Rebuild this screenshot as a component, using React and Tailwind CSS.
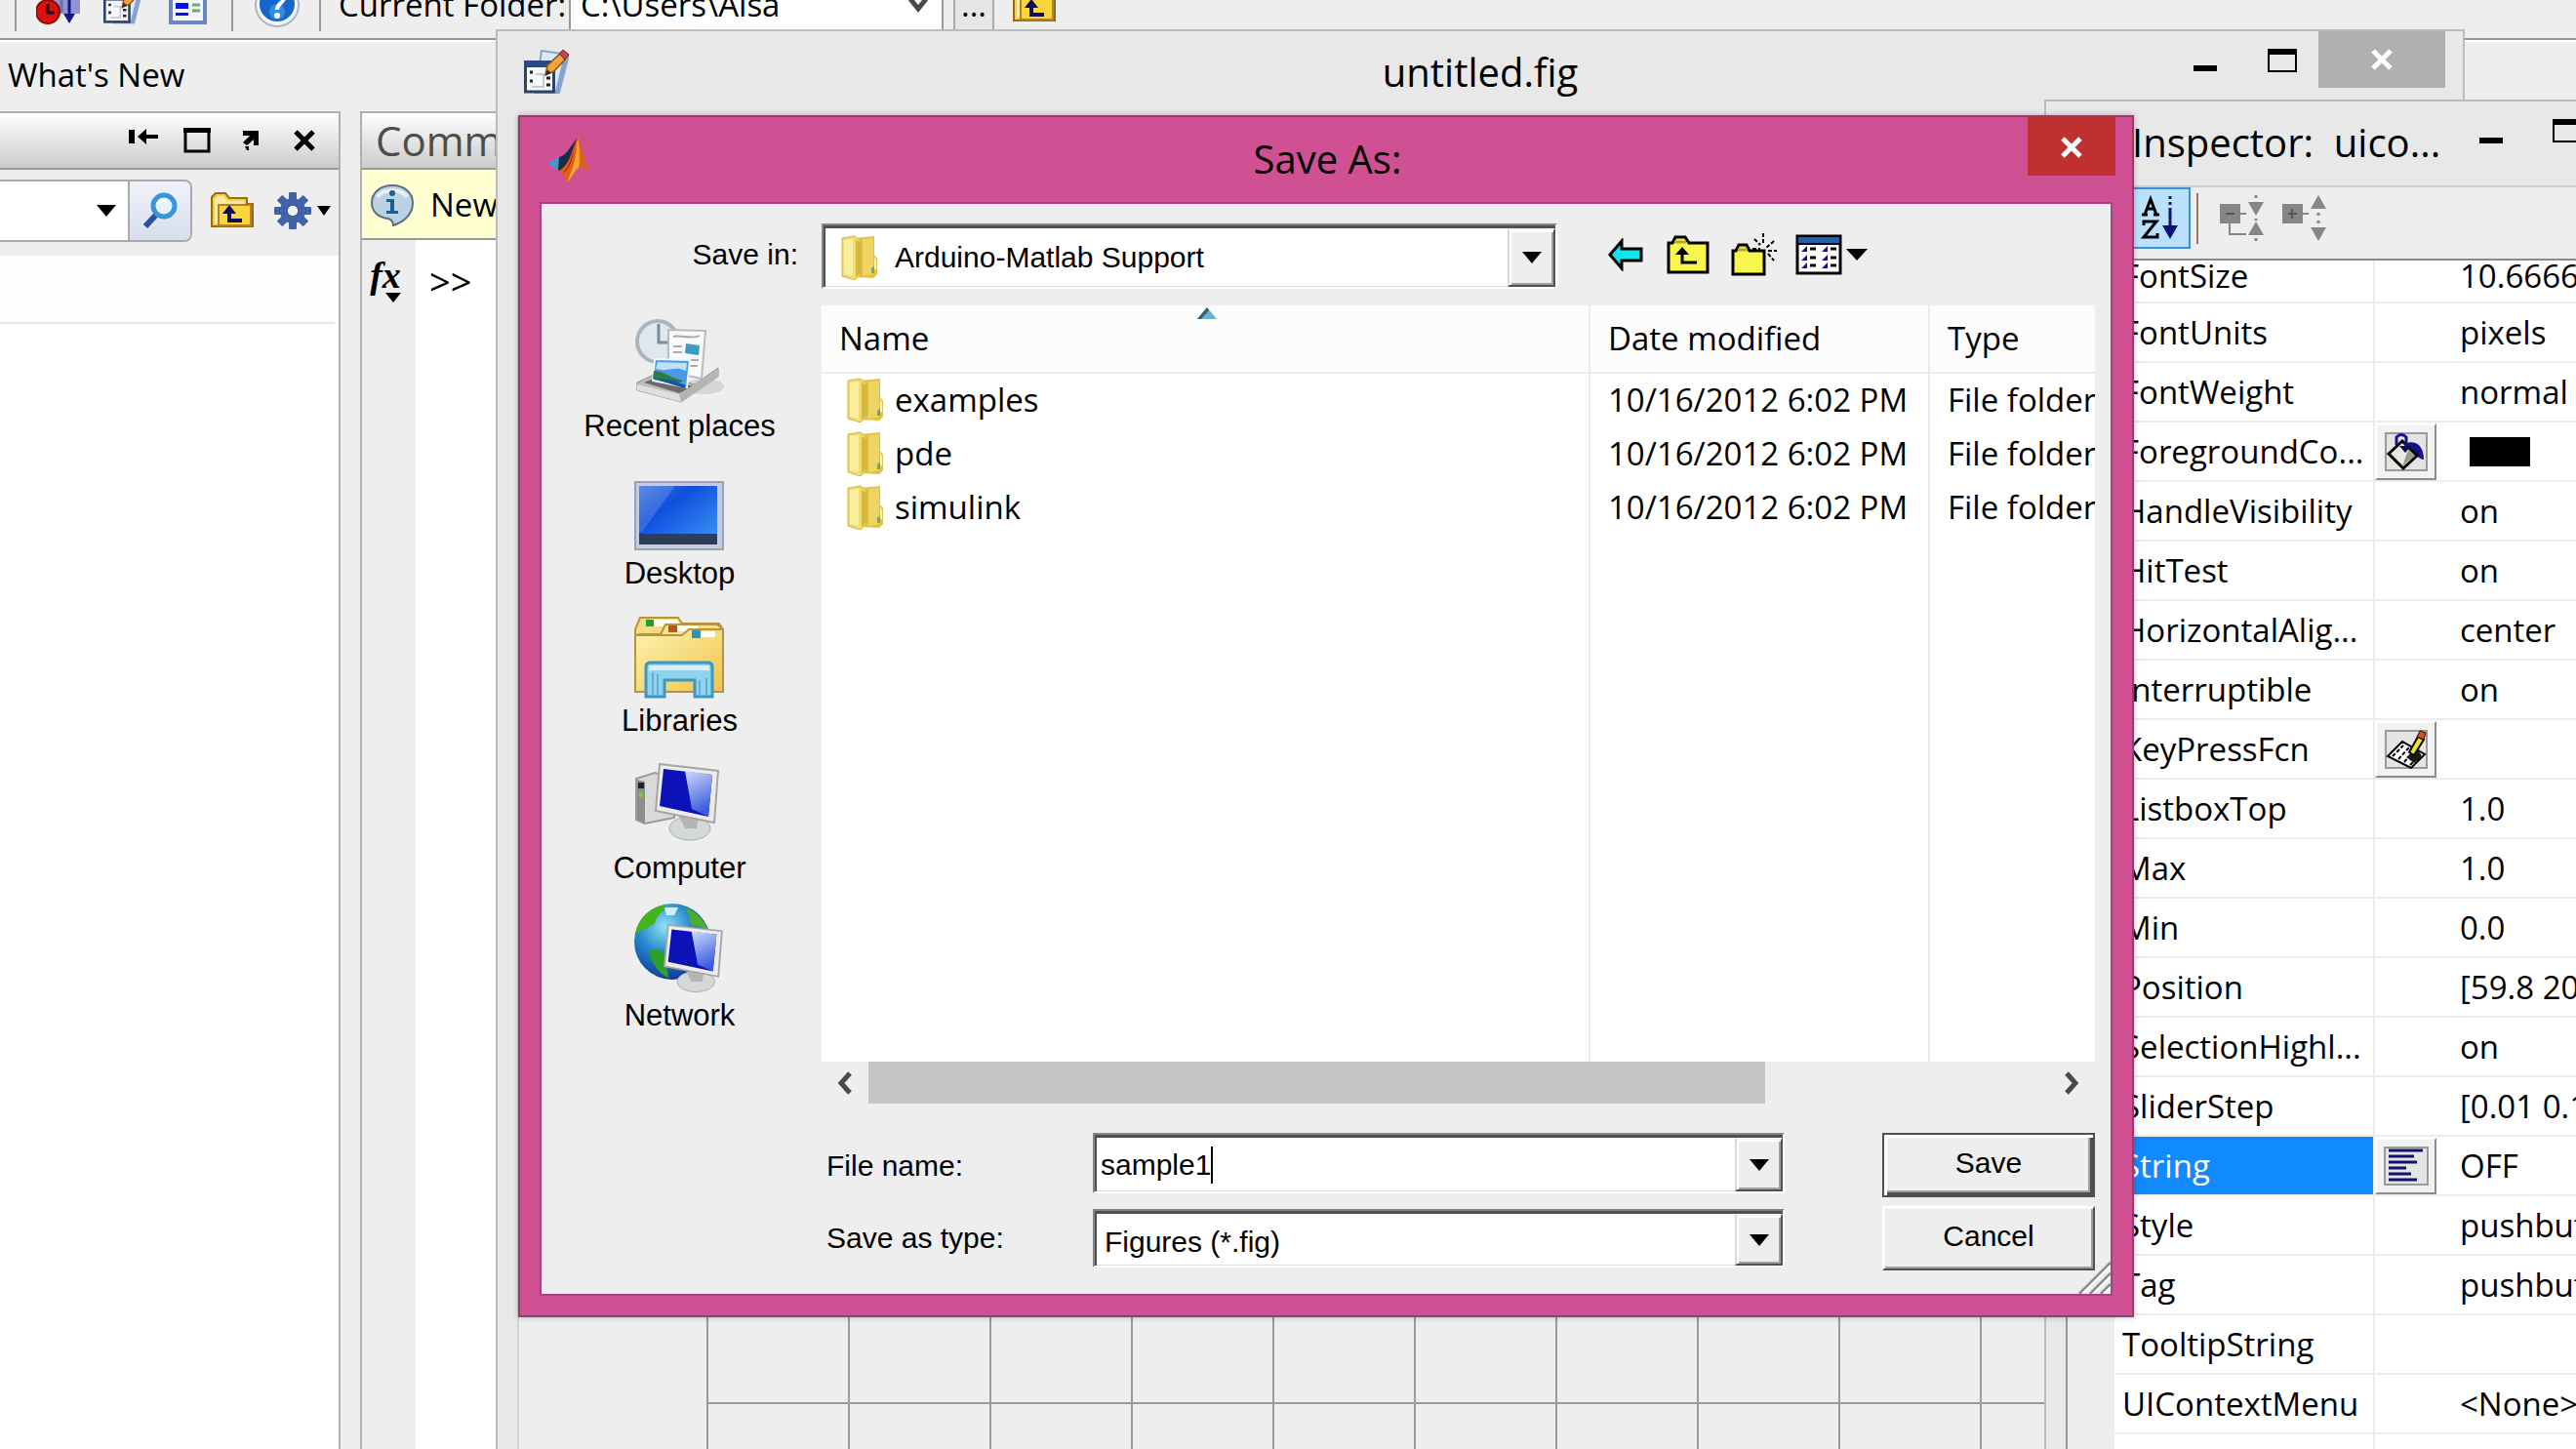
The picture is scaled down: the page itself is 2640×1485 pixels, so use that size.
import React from "react";

const UI = "font-['Open_Sans','Noto_Sans',sans-serif]";
const CLASSIC = "font-['Liberation_Sans',Arial,sans-serif] text-[30px] leading-9";

/* ---------- small glyphs ---------- */

function Triangle({ className = "w-5 h-3" }) {
  return (
    <svg viewBox="0 0 20 12" className={className} preserveAspectRatio="none" aria-hidden="true">
      <path d="M0 0H20L10 12Z" fill="#000" />
    </svg>
  );
}

function Cross({ className, stroke = "#fff" }) {
  return (
    <svg viewBox="0 0 24 22" className={className} aria-hidden="true">
      <path d="M3 2L21 20M21 2L3 20" stroke={stroke} strokeWidth="5" />
    </svg>
  );
}

function Minimize() {
  return (
    <svg viewBox="0 0 24 24" className="h-6 w-6" aria-hidden="true">
      <path d="M0 17H24V23H0Z" fill="#000" />
    </svg>
  );
}

function Maximize() {
  return (
    <svg viewBox="0 0 30 24" className="h-6 w-[30px]" aria-hidden="true">
      <path d="M1 2H29V23H1Z" fill="none" stroke="#000" strokeWidth="2" />
      <path d="M0 0H30V6H0Z" fill="#000" />
    </svg>
  );
}

function Chevron({ d, className = "h-6 w-5" }) {
  return (
    <svg viewBox="0 0 20 24" className={className} aria-hidden="true">
      <path d={d} fill="none" stroke="#4a4a4a" strokeWidth="5" />
    </svg>
  );
}

/* ---------- icons ---------- */

function ClockIcon() {
  return (
    <svg viewBox="0 0 46 40" className="h-10 w-[46px]" aria-hidden="true">
      <rect x="16" y="2" width="29" height="27" fill="#8f95cf" />
      <path d="M26 4V28M20 10H44" stroke="#6a70b4" strokeWidth="3" />
      <path d="M34 0V32" stroke="#14148c" strokeWidth="3" />
      <path d="M28 29H40L34 39Z" fill="#14148c" />
      <circle cx="12" cy="27" r="12" fill="#d81212" stroke="#8c0808" strokeWidth="2" />
      <path d="M12 19V28H19" fill="none" stroke="#300" strokeWidth="3" />
    </svg>
  );
}

function GuideIcon({ className = "h-[46px] w-[46px]" }) {
  return (
    <svg viewBox="0 0 46 46" className={className} aria-hidden="true">
      <path d="M18 1L46 5L36 44H12Z" fill="#dbe8f7" stroke="#8aa5c8" strokeWidth="2" />
      <path d="M42 10L34 43H28" fill="none" stroke="#7fa3d4" strokeWidth="4" />
      <rect x="1.500" y="13" width="29" height="30" fill="#f6f8fb" stroke="#2b4468" strokeWidth="3" />
      <rect x="0" y="11" width="32" height="7" fill="#2a4a86" />
      <path d="M6 23H9M6 32H9M23 29H27M23 36H27" stroke="#222" strokeWidth="3" />
      <path d="M12 25H20V38H8" fill="none" stroke="#c2cad6" strokeWidth="2" />
      <path d="M22 26L24 16L37 4L43 9L31 22Z" fill="#f2a33a" stroke="#8a4f10" strokeWidth="1.500" />
      <path d="M36 4L40 0L46 5L42 10Z" fill="#c8454a" stroke="#722" strokeWidth="1" />
      <path d="M22 26L24 20L28 24Z" fill="#3a2a14" />
    </svg>
  );
}

function ReportIcon() {
  return (
    <svg viewBox="0 0 40 40" className="h-10 w-10" aria-hidden="true">
      <rect x="2" y="-10" width="35" height="48" fill="#f3f6fd" stroke="#6d86c4" strokeWidth="4" />
      <path d="M7 18H20V24H7ZM7 28H20V31H7Z" fill="#0a10e8" />
      <path d="M7 4H20V12H7Z" fill="#0a10e8" />
      <path d="M24 20H32M24 26H32" stroke="#6da86a" strokeWidth="3" />
      <path d="M24 8H32" stroke="#999" strokeWidth="3" />
    </svg>
  );
}

function HelpIcon() {
  return (
    <svg viewBox="0 0 46 46" className="h-[46px] w-[46px]" aria-hidden="true">
      <circle cx="23" cy="23" r="22" fill="#f2f7fd" stroke="#a9b6c8" strokeWidth="2" />
      <circle cx="23" cy="22" r="18" fill="#1466c8" />
      <circle cx="23" cy="30" r="8" fill="#2f8be6" />
      <path d="M16 16C16 7 30 7 30 16C30 21 23 21 23 28" fill="none" stroke="#fff" strokeWidth="4" />
      <circle cx="23" cy="34" r="3" fill="#fff" />
    </svg>
  );
}

function FolderUpGold({ className = "h-10 w-[46px]" }) {
  return (
    <svg viewBox="0 0 46 40" className={className} aria-hidden="true">
      <path d="M2 36V6L6 2H16L20 7H38V13H44V36Z" fill="#f5cf4a" stroke="#9a6a14" strokeWidth="2" />
      <path d="M5 33V8L8 5H14L18 10H35V13H9V33Z" fill="#fbeaa0" />
      <rect x="9" y="14" width="33" height="21" fill="#fbd53e" stroke="#b5831c" strokeWidth="2" />
      <path d="M20 18V30H33" fill="none" stroke="#0c0c5a" strokeWidth="4" />
      <path d="M13 23L20 14L27 23Z" fill="#0c0c5a" />
    </svg>
  );
}

function MagnifierIcon() {
  return (
    <svg viewBox="0 0 36 38" className="h-[38px] w-9" aria-hidden="true">
      <path d="M3 35L15 22" stroke="#2b4fa8" strokeWidth="6" />
      <circle cx="22" cy="14" r="11" fill="#e4f2fc" stroke="#3a95d8" strokeWidth="5" />
      <path d="M16 12C17 8 22 7 25 9" fill="none" stroke="#fff" strokeWidth="3" />
    </svg>
  );
}

function GearIcon() {
  const teeth = [0, 45, 90, 135, 180, 225, 270, 315];
  return (
    <svg viewBox="0 0 38 38" className="h-[38px] w-[38px]" aria-hidden="true">
      {teeth.map((a) => (
        <rect key={a} x="15" y="0" width="8" height="10" rx="1" fill="#3f62a8" transform={`rotate(${a} 19 19)`} />
      ))}
      <circle cx="19" cy="19" r="9" fill="#eef" stroke="#3f62a8" strokeWidth="8" />
      <circle cx="19" cy="19" r="5" fill="#eee" />
    </svg>
  );
}

function InfoIcon() {
  return (
    <svg viewBox="0 0 46 44" className="h-11 w-[46px]" aria-hidden="true">
      <path
        d="M23 2C10 2 2 10 2 20C2 29 9 35 19 36C22 37 24 40 24 43C31 41 44 34 44 20C44 10 36 2 23 2Z"
        fill="#bcd2e2"
        stroke="#5c6f80"
        strokeWidth="2"
      />
      <path d="M8 14C12 6 32 4 38 14" fill="none" stroke="#e6f0f6" strokeWidth="4" />
      <circle cx="23" cy="10" r="3" fill="#1d5f8c" />
      <path d="M17 16H25V28H29V31H17V28H21V19H17Z" fill="#1d5f8c" />
    </svg>
  );
}

function MatlabIcon() {
  return (
    <svg viewBox="0 0 44 46" className="h-[46px] w-11" aria-hidden="true">
      <path d="M0 26L14 19L22 26L12 34Z" fill="#4a93cf" />
      <path d="M12 20C20 18 24 8 31 0L27 20L18 38L11 33Z" fill="#1e2a4a" />
      <path d="M31 0C25 12 24 24 16 31L12 34C16 36 18 42 20 46C26 42 27 34 32 31C37 28 40 32 43 36C38 24 36 8 31 0Z" fill="#e0601a" />
      <path d="M31 0C29 16 30 24 20 46C25 42 27 34 32 31C34 22 33 10 31 0Z" fill="#f7a531" />
      <path d="M27 12C24 24 22 30 16 36C20 34 25 28 27 12Z" fill="#8c1f10" />
    </svg>
  );
}

function FolderIcon({ className = "h-[46px] w-[38px] shrink-0" }) {
  return (
    <svg viewBox="0 0 38 46" className={className} aria-hidden="true">
      <path d="M14 3L34 1V20L37 24V40L33 44L14 43Z" fill="#e2c242" />
      <path d="M22 4L33 3V40L22 42Z" fill="#eed562" />
      <path d="M1 3L14 1L20 6V40L14 46L1 42Z" fill="#efdc70" stroke="#d2b640" strokeWidth="1" />
      <path d="M3 5L12 4V42L3 40Z" fill="#f8eea4" />
      <path d="M15 5L21 8V38L15 43Z" fill="#d8b83c" />
      <path d="M31 34V39H34V31Z" fill="#6aa894" />
      <path d="M34 22L36 26V36L34 34Z" fill="#fbf4c8" />
    </svg>
  );
}

function BackIcon() {
  return (
    <svg viewBox="0 0 36 34" className="h-[34px] w-9" aria-hidden="true">
      <path d="M2 17L14 3V11H34V23H14V31Z" fill="#12e4ea" stroke="#000" strokeWidth="3" />
    </svg>
  );
}

function UpOneLevelIcon() {
  return (
    <svg viewBox="0 0 44 40" className="h-10 w-11" aria-hidden="true">
      <path d="M2 38V8H6L9 2H19L23 8H42V38Z" fill="#f6f64c" stroke="#000" strokeWidth="3" />
      <path d="M8 7H20" stroke="#b8a830" strokeWidth="3" />
      <path d="M16 17V28H31" fill="none" stroke="#000" strokeWidth="3" />
      <path d="M9 20L16 12L23 20Z" fill="#000" />
    </svg>
  );
}

function NewFolderIcon() {
  return (
    <svg viewBox="0 0 48 46" className="h-[46px] w-12" aria-hidden="true">
      <path d="M2 43V19H5L8 13H16L19 19H34V43Z" fill="#f6f64c" stroke="#000" strokeWidth="3" />
      <path d="M7 18H17" stroke="#b8a830" strokeWidth="3" />
      <path
        d="M33 1V11M24 7L30 13M44 9L36 16M22 17H30M38 19H47M38 22L44 29M34 21V26"
        stroke="#000"
        strokeWidth="2"
        strokeDasharray="4 2"
      />
    </svg>
  );
}

function ViewsIcon() {
  return (
    <svg viewBox="0 0 48 42" className="h-[42px] w-12" aria-hidden="true">
      <rect x="2" y="2" width="44" height="38" fill="#fff" stroke="#000" strokeWidth="3" />
      <rect x="3" y="3" width="42" height="6" fill="#1f5fae" />
      <path d="M1 10H47" stroke="#000" strokeWidth="2" />
      {[16, 25, 33].map((y) => (
        <g key={y}>
          <path d={`M6 ${y + 2}L12 ${y - 4}V${y + 2}ZM27 ${y + 2}L33 ${y - 4}V${y + 2}Z`} fill="#12128c" />
          <path d={`M15 ${y - 1}H21M36 ${y - 1}H42`} stroke="#000" strokeWidth="3" />
        </g>
      ))}
    </svg>
  );
}

function RecentPlacesIcon() {
  return (
    <svg viewBox="0 0 92 90" className="h-[90px] w-[92px]" aria-hidden="true">
      <ellipse cx="72" cy="70" rx="20" ry="8" fill="#d6d6d6" />
      <circle cx="24" cy="24" r="21" fill="#dfe8ee" stroke="#aab6bf" strokeWidth="4" />
      <path d="M25 6V25H34" fill="none" stroke="#7d8b98" strokeWidth="3" />
      <path d="M35 12L73 13L69 62L35 55Z" fill="#f8f9fa" stroke="#b8bcc0" strokeWidth="2" />
      <path d="M40 19C46 17 60 22 67 18M40 29H49M40 35H49M57 43H66M57 49H65" fill="none" stroke="#b3a7a7" strokeWidth="2" />
      <path d="M53 26L67 28L66 38L52 36Z" fill="#3b9bc0" />
      <path d="M3 66L20 58L62 68L86 51V60L48 86L3 74Z" fill="#bcbcba" stroke="#8e8e8c" strokeWidth="1" />
      <path d="M10 66L22 61L62 70L46 77Z" fill="#6c6c6c" />
      <path d="M3 68L46 78L86 53V60L48 86L3 74Z" fill="#dededc" />
      <path d="M46 78L86 53V60L48 86Z" fill="#b4b4b2" />
      <path d="M21 42L57 43L54 71L19 64Z" fill="#4a9be6" stroke="#eef6fc" strokeWidth="2" />
      <path d="M24 45L54 46L53 54C40 48 34 56 22 52Z" fill="#bfe1f8" />
      <path d="M20 54C30 54 38 62 50 64L44 68L19 62Z" fill="#2e7a48" />
      <path d="M19 62L40 64L53 69L52 72Z" fill="#1554a0" />
    </svg>
  );
}

function DesktopIcon() {
  return (
    <svg viewBox="0 -14 92 86" className="h-[86px] w-[92px]" aria-hidden="true">
      <defs>
        <linearGradient id="desk" x1="0" y1="0" x2="1" y2="1">
          <stop offset="0" stopColor="#3f74dc" />
          <stop offset="0.350" stopColor="#0f4fdc" />
          <stop offset="1" stopColor="#4098f8" />
        </linearGradient>
      </defs>
      <rect x="1" y="1" width="90" height="69" fill="#c4cddd" stroke="#98a3b8" strokeWidth="2" />
      <rect x="5" y="5" width="80" height="60" fill="url(#desk)" />
      <path d="M5 5H42L8 52H5Z" fill="#fff" opacity="0.150" />
      <rect x="5" y="54" width="80" height="11" fill="#2e3d58" />
    </svg>
  );
}

function LibrariesIcon() {
  return (
    <svg viewBox="0 -2 94 88" className="h-[88px] w-[94px]" aria-hidden="true">
      <defs>
        <linearGradient id="lib" x1="0" y1="0" x2="1" y2="1">
          <stop offset="0" stopColor="#fdf3b0" />
          <stop offset="1" stopColor="#efc44a" />
        </linearGradient>
      </defs>
      <path d="M2 78V14L7 2H46L50 8H88L92 14V78Z" fill="#f4dc83" stroke="#b8943c" strokeWidth="2" />
      <path d="M20 4H46V11H20ZM42 9H60V16H42Z" fill="#fffdf0" />
      <rect x="13" y="4" width="8" height="7" fill="#17a52a" />
      <path d="M2 78V22L6 19H28L33 9H86L92 14V78Z" fill="#f8e18c" stroke="#b8943c" strokeWidth="2" />
      <path d="M44 10H66V16H44Z" fill="#fffdf0" />
      <rect x="36" y="10" width="9" height="7" fill="#c4501c" />
      <path d="M2 78V20H50L57 14H92V78Z" fill="url(#lib)" stroke="#b8943c" strokeWidth="2" />
      <path d="M68 16H84V22H68Z" fill="#fffdf0" />
      <rect x="60" y="15" width="9" height="8" fill="#2a94c0" />
      <path d="M13 83V52Q13 48 18 48H76Q81 48 81 52V83H63V66H32V83Z" fill="#8fd3ee" stroke="#3d97c0" strokeWidth="3" />
      <path d="M16 51H78V56H16Z" fill="#d4f1fb" />
      <path d="M20 58V82M25 60V82M68 66V82M75 64V82" stroke="#5cb0d8" strokeWidth="2" />
    </svg>
  );
}

function Monitor({ id }) {
  return (
    <g>
      <defs>
        <linearGradient id={id} x1="0" y1="0" x2="0.300" y2="1">
          <stop offset="0" stopColor="#cfdcfa" />
          <stop offset="1" stopColor="#3a5ae0" />
        </linearGradient>
      </defs>
      <ellipse cx="35" cy="66" rx="21" ry="12" fill="#d5d8d8" stroke="#a9acac" strokeWidth="1" />
      <path d="M24 54H44L42 66H30Z" fill="#b4b6b4" />
      <path d="M4 0L64 7L60 60L0 48Z" fill="#ececec" stroke="#a5a5a5" strokeWidth="2" />
      <path d="M8 5L58 11L54 54L4 43Z" fill="#0d12b8" />
      <path d="M30 7L58 11L54 54L37 46Z" fill={`url(#${id})`} />
    </g>
  );
}

function ComputerIcon() {
  return (
    <svg viewBox="0 2 94 84" className="h-[84px] w-[94px]" aria-hidden="true">
      <path d="M3 18L22 12L42 18V58L12 64L3 60Z" fill="#d9d9d9" stroke="#9a9a9a" strokeWidth="2" />
      <path d="M4 19L12 21V63L4 60Z" fill="#8d8d8d" />
      <rect x="5" y="22" width="6" height="6" fill="#222" />
      <rect x="6" y="32" width="4" height="5" fill="#7ac14a" />
      <g transform="translate(23 3)">
        <Monitor id="scr-a" />
      </g>
    </svg>
  );
}

function NetworkIcon() {
  return (
    <svg viewBox="0 4 94 94" className="h-[94px] w-[94px] overflow-visible" aria-hidden="true">
      <defs>
        <radialGradient id="globe" cx="0.400" cy="0.300" r="0.700">
          <stop offset="0" stopColor="#8fe2f6" />
          <stop offset="0.500" stopColor="#2489cc" />
          <stop offset="1" stopColor="#123a94" />
        </radialGradient>
      </defs>
      <circle cx="40" cy="41" r="39" fill="url(#globe)" />
      <path d="M2 34C5 16 18 5 34 3C30 12 24 14 22 22C16 28 8 28 2 34Z" fill="#43b31e" />
      <path d="M52 6C64 10 72 18 76 28L60 24C56 18 60 14 52 6Z" fill="#4cae2c" />
      <path d="M16 50C26 46 34 52 34 60L36 78C26 74 18 62 16 50Z" fill="#2ea02a" />
      <path d="M32 6H46L42 14H34Z" fill="#cfeff8" />
      <g transform="translate(32 24) scale(0.920 0.880)">
        <Monitor id="scr-b" />
      </g>
    </svg>
  );
}

function PaintIcon() {
  return (
    <svg viewBox="0 0 44 40" className="h-10 w-11" aria-hidden="true">
      <rect x="1" y="1" width="42" height="38" fill="#e4e4e4" stroke="#9a9a9a" strokeWidth="2" />
      <path d="M22 11C34 8 40 16 40 28C36 28 34 24 29 22Z" fill="#14148c" />
      <path d="M4 22L18 9L33 24L19 37Z" fill="#e8e8e0" stroke="#000" strokeWidth="3" />
      <path d="M18 35L31 24L24 18Z" fill="#9a9a90" />
      <path d="M12 13V5Q17 0 22 5V18" fill="none" stroke="#14148c" strokeWidth="3" />
      <path d="M15 14H27L21 21Z" fill="#0a0a5a" />
    </svg>
  );
}

function KeypadIcon() {
  return (
    <svg viewBox="0 0 44 40" className="h-10 w-11" aria-hidden="true">
      <rect x="1" y="1" width="42" height="38" fill="#e4e4e4" stroke="#9a9a9a" strokeWidth="2" />
      <path d="M3 27L18 12L41 25L27 39Z" fill="#fff" stroke="#000" strokeWidth="2" />
      <path d="M8 27L19 16M14 30L25 18M20 33L30 21M26 36L37 25" stroke="#000" strokeWidth="2" strokeDasharray="4 2" />
      <path d="M22 28L34 20L38 28L30 34Z" fill="#1a1a10" />
      <path d="M25 23L34 7L40 10L30 26Z" fill="#f0e42a" stroke="#000" strokeWidth="2" />
      <path d="M33 7L36 1L42 3L40 10Z" fill="#d0502c" stroke="#400" strokeWidth="1" />
    </svg>
  );
}

function TextLinesIcon() {
  return (
    <svg viewBox="0 0 46 40" className="h-10 w-[46px]" aria-hidden="true">
      <rect x="1" y="1" width="44" height="38" fill="#e4e4e4" stroke="#9a9a9a" strokeWidth="2" />
      <path d="M5 4H40M5 10H31M5 16H34M5 22H23M5 28H28M5 34H34" stroke="#12126e" strokeWidth="3" />
    </svg>
  );
}

function SortAzIcon() {
  return (
    <svg viewBox="0 0 40 48" className="h-12 w-10" aria-hidden="true">
      <path d="M2 20H8M14 20H20M5 20L11 4L17 20M7 14H15" fill="none" stroke="#000" strokeWidth="3" />
      <path d="M4 31V27H17L4 43H18V39" fill="none" stroke="#000" strokeWidth="3" />
      <path d="M31 1V4M31 7V10M31 13V34" stroke="#10107c" strokeWidth="3" />
      <path d="M23 31H39L31 45Z" fill="#10107c" />
    </svg>
  );
}

function CollapseIcon() {
  return (
    <svg viewBox="0 0 46 48" className="h-12 w-[46px]" aria-hidden="true">
      <path d="M0 9H21V29H0Z" fill="#868686" />
      <path d="M6 19H15" stroke="#555" strokeWidth="2" />
      <path d="M21 19H27M10 29V40H27" fill="none" stroke="#868686" strokeWidth="2" />
      <path d="M29 7H45L37 21ZM37 27L45 41H29Z" fill="#868686" />
      <path d="M37 0V3M37 24V26M37 44V47" stroke="#868686" strokeWidth="3" />
    </svg>
  );
}

function ExpandIcon() {
  return (
    <svg viewBox="0 0 46 48" className="h-12 w-[46px]" aria-hidden="true">
      <path d="M0 9H21V29H0Z" fill="#868686" />
      <path d="M6 19H15M10 14V24" stroke="#555" strokeWidth="2" />
      <path d="M21 19H27" stroke="#868686" strokeWidth="2" />
      <path d="M37 0L45 14H29ZM29 33H45L37 47Z" fill="#868686" />
      <path d="M37 18V21M37 26V29" stroke="#868686" strokeWidth="3" />
    </svg>
  );
}

/* ---------- classic controls ---------- */

function Sunken({ className = "", children }) {
  return (
    <div
      className={`relative flex items-center border-2 border-t-[#858585] border-l-[#858585] border-r-white border-b-white bg-white pt-[3px] pl-0.5 shadow-[inset_2px_3px_0_#505050,inset_0_-1px_0_#dcdcdc] ${className}`}
    >
      {children}
      <span className="pointer-events-none absolute top-[3px] right-0 bottom-0 flex w-[49px] items-center justify-center border-2 border-t-[#f4f4f4] border-l-[#d8d8d8] border-r-[#505050] border-b-[#505050] bg-[#eeeeee] shadow-[inset_2px_2px_0_#fff,inset_-2px_-2px_0_#a0a0a0]">
        <Triangle className="h-3 w-5" />
      </span>
    </div>
  );
}

function PushButton({ primary, children }) {
  return (
    <button
      type="button"
      className={
        primary
          ? `h-[66px] w-[218px] border-2 border-[#505050] bg-[#eeeeee] pb-1 shadow-[inset_3px_3px_0_#fff,inset_-3px_-3px_0_#505050,inset_-5px_-5px_0_#a0a0a0] ${CLASSIC}`
          : `h-[66px] w-[218px] border-2 border-t-white border-l-white border-r-[#505050] border-b-[#505050] bg-[#eeeeee] pb-1 shadow-[inset_1px_1px_0_#f8f8f8,inset_-2px_-2px_0_#a0a0a0] ${CLASSIC}`
      }
    >
      {children}
    </button>
  );
}

/* ---------- main MATLAB window ---------- */

function ToolSeparator() {
  return <span className="h-[54px] w-0.5 bg-[#999]" />;
}

function MainWindow() {
  return (
    <div className="flex h-full flex-col bg-[#eeeeee]">
      <div className="-mt-[30px] flex h-[71px] shrink-0 items-center border-b-2 border-[#979797] pl-[15px] text-[33px] leading-10 whitespace-nowrap">
        <ToolSeparator />
        <button type="button" aria-label="Profiler" className="ml-5"><ClockIcon /></button>
        <button type="button" aria-label="GUIDE" className="ml-5"><GuideIcon className="h-10 w-[46px]" /></button>
        <button type="button" aria-label="Report" className="mr-6 ml-6"><ReportIcon /></button>
        <ToolSeparator />
        <button type="button" aria-label="Help" className="mr-5 ml-[22px]"><HelpIcon /></button>
        <ToolSeparator />
        <label htmlFor="cwd" className="ml-[18px] w-[236px]">Current Folder:</label>
        <div className="relative flex h-[60px] w-[384px] items-center border-2 border-[#999] bg-white">
          <select id="cwd" className="h-full w-full appearance-none pl-2.5">
            <option>C:\Users\Alsa</option>
          </select>
          <Chevron d="M2 6L10 16L18 6" className="pointer-events-none absolute right-3.5 h-6 w-5" />
        </div>
        <button type="button" aria-label="Browse for folder" className="ml-2.5 h-[60px] w-[42px] border-2 border-[#aaa] bg-[#e6e6e6]">...</button>
        <button type="button" aria-label="Up one folder" className="ml-[18px]"><FolderUpGold /></button>
      </div>

      <div className="flex h-[73px] shrink-0 items-center border-t-2 border-white pb-1 pl-2 text-[33px] leading-10">
        <a href="#whats-new">What's New</a>
      </div>

      <div className="flex min-h-0 flex-1 gap-5">
        <section className="flex w-[349px] flex-col border-t-2 border-r-2 border-[#b0b0b0] bg-white">
          <div className="flex h-[58px] justify-end border-b-2 border-[#999] bg-linear-to-b from-white to-[#cbcbcb] pr-2">
            <button type="button" aria-label="Dock" className="flex w-[55px] items-center justify-center">
              <svg viewBox="0 0 30 16" className="mb-2 h-4 w-[30px]"><path d="M0 1H6V15H0ZM9 8L18 0V6H30V10H18V16Z" fill="#000" /></svg>
            </button>
            <button type="button" aria-label="Maximize panel" className="flex w-[55px] items-center justify-center">
              <svg viewBox="0 0 28 26" className="h-[26px] w-7"><path d="M2 2H26V24H2Z" fill="none" stroke="#000" strokeWidth="3" /><path d="M0 0H28V5H0Z" /></svg>
            </button>
            <button type="button" aria-label="Undock" className="flex w-[55px] items-center justify-center">
              <svg viewBox="0 0 18 20" className="h-5 w-[18px]"><path d="M1 0H17V15H12V9L5 15L1 12L8 5H1Z" /><path d="M3 16H7V20H5Z" /></svg>
            </button>
            <button type="button" aria-label="Close panel" className="flex w-[55px] items-center justify-center">
              <Cross className="h-[22px] w-6" stroke="#000" />
            </button>
          </div>
          <div className="flex h-[88px] items-center bg-[#eeeeee] pb-1">
            <div className="flex h-16 w-[197px] overflow-hidden rounded-r-lg border-2 border-l-0 border-[#aaa] bg-white">
              <div className="relative flex flex-1 items-center">
                <select aria-label="Folder address" className="h-full w-full appearance-none" />
                <Triangle className="pointer-events-none absolute right-3 h-3 w-5" />
              </div>
              <button type="button" aria-label="Search" className="flex w-16 items-center justify-center border-l-2 border-[#aaa] bg-linear-to-b from-[#f0f2fa] to-[#d8deee]">
                <MagnifierIcon />
              </button>
            </div>
            <button type="button" aria-label="Up" className="ml-[18px]"><FolderUpGold /></button>
            <button type="button" aria-label="Actions" className="ml-5 flex items-center gap-1.5">
              <GearIcon />
              <Triangle className="h-2.5 w-3.5" />
            </button>
          </div>
          <div className="mr-1 h-[70px] border-b-2 border-[#e0e8ee] bg-[#fcfdfd]" />
        </section>

        <section className="flex flex-1 flex-col border-t-2 border-l-2 border-[#b0b0b0] bg-white">
          <h2 className="flex h-[58px] items-center border-b-2 border-[#999] bg-linear-to-b from-white to-[#cbcbcb] pl-3.5 text-[42px] leading-[56px] text-[#4c4c4c]">
            Command Window
          </h2>
          <div className="flex h-[72px] items-center gap-4 border-b-2 border-[#999] bg-[#ffffd2] pt-0.5 pl-2 text-[33px] leading-10">
            <InfoIcon />
            <a href="#start">New to MATLAB?</a>
          </div>
          <div className="flex flex-1">
            <div className="w-[55px] bg-[#eeeeee] pt-[18px] pl-2">
              <button type="button" aria-label="Function browser" className="flex flex-col items-center font-['Liberation_Serif',serif] text-[38px] leading-9 font-bold italic">
                fx
                <Triangle className="ml-4 h-2.5 w-4" />
              </button>
            </div>
            <div className="pt-[22px] pl-3.5 text-[38px] leading-10">&gt;&gt;</div>
          </div>
        </section>
      </div>
    </div>
  );
}

/* ---------- GUIDE figure editor ---------- */

function GuideWindow() {
  return (
    <section className="absolute top-[30px] right-[114px] bottom-0 left-[508px] flex flex-col border-2 border-b-0 border-[#bcbcbc] bg-[#e8e8e8]">
      <div className="grid h-[88px] shrink-0 grid-cols-[1fr_auto_1fr]">
        <div className="flex items-center pb-1 pl-[27px]"><GuideIcon /></div>
        <h1 className="flex items-center pb-1 text-[40px] leading-[52px]">untitled.fig</h1>
        <div className="flex justify-end pr-[18px]">
          <button type="button" aria-label="Minimize" className="mt-[18px] mr-[52px] h-6"><Minimize /></button>
          <button type="button" aria-label="Maximize" className="mt-[18px] mr-[22px] h-6"><Maximize /></button>
          <button type="button" aria-label="Close" className="flex h-[58px] w-[130px] items-center justify-center bg-[#b0b0b0]">
            <Cross className="h-[22px] w-6" />
          </button>
        </div>
      </div>
      <div className="mx-5 min-h-0 flex-1 overflow-hidden border-l-2 border-[#d2d2d2] bg-[#eeeeee] pt-3.5 pl-[192px]">
        <div className="grid grid-cols-[repeat(12,145px)] grid-rows-[repeat(10,145px)]">
          {Array.from({ length: 120 }, (_, i) => (
            <div key={i} className="border-b-2 border-l-2 border-[#9b9b9b]" />
          ))}
        </div>
      </div>
    </section>
  );
}

/* ---------- property inspector ---------- */

const PROPS = [
  { name: "FontUnits", value: "pixels" },
  { name: "FontWeight", value: "normal" },
  { name: "ForegroundCo...", icon: PaintIcon, swatch: true },
  { name: "HandleVisibility", value: "on" },
  { name: "HitTest", value: "on" },
  { name: "HorizontalAlig...", value: "center" },
  { name: "Interruptible", value: "on" },
  { name: "KeyPressFcn", icon: KeypadIcon },
  { name: "ListboxTop", value: "1.0" },
  { name: "Max", value: "1.0" },
  { name: "Min", value: "0.0" },
  { name: "Position", value: "[59.8 20.846 13.8 1.769]" },
  { name: "SelectionHighl...", value: "on" },
  { name: "SliderStep", value: "[0.01 0.1]" },
  { name: "String", value: "OFF", icon: TextLinesIcon, selected: true },
  { name: "Style", value: "pushbutton" },
  { name: "Tag", value: "pushbutton1" },
  { name: "TooltipString", value: "" },
  { name: "UIContextMenu", value: "<None>" },
  { name: "", value: "" },
];

function InspectorWindow() {
  return (
    <section className="absolute top-[102px] bottom-0 left-[2095px] flex w-[720px] flex-col border-2 border-b-0 border-[#bcbcbc] bg-[#e8e8e8]">
      <div className="flex h-[86px] shrink-0 pl-[88px]">
        <h2 className="flex items-center pb-0.5 text-[40px] leading-[52px] whitespace-pre">Inspector:  uico...</h2>
        <button type="button" aria-label="Minimize" className="mt-5 ml-auto h-6"><Minimize /></button>
        <button type="button" aria-label="Maximize" className="mt-[18px] mr-[167px] ml-[51px] h-6"><Maximize /></button>
      </div>
      <div className="ml-5 flex min-h-0 flex-1 flex-col border-t-2 border-l-2 border-t-[#cfcfcf] border-l-[#979797] bg-[#eeeeee]">
        <div className="flex h-[73px] shrink-0 items-center pb-2.5 pl-[62px]">
          <button type="button" aria-label="Sort alphabetically" className="flex h-[63px] w-16 items-center justify-center border-2 border-[#3b8fd8] bg-[#b9e0fc]">
            <SortAzIcon />
          </button>
          <span className="ml-1.5 h-[52px] w-0.5 bg-[#8a7a70]" />
          <button type="button" aria-label="Collapse all" className="ml-[22px]"><CollapseIcon /></button>
          <button type="button" aria-label="Expand all" className="ml-[18px]"><ExpandIcon /></button>
        </div>
        <div className="flex min-h-0 flex-1 flex-col overflow-hidden border-t-2 border-[#8a8a8a] pl-[48px]">
          <table className="w-full shrink-0 table-fixed border-collapse bg-white text-[33px] leading-10 whitespace-nowrap">
            <colgroup>
              <col className="w-[266px]" />
              <col className="w-[66px]" />
              <col />
            </colgroup>
            <tbody>
              <tr className="h-[43px] border-b-2 border-[#ececec]">
                <th scope="row" className="h-[43px] border-r-2 border-[#ececec] p-0 pl-2 text-left font-normal"><div className="-mt-4 h-[26px] leading-8">FontSize</div></th>
                <td />
                <td className="p-0 pl-[22px]"><div className="-mt-4 h-[26px] leading-8">10.66666</div></td>
              </tr>
              {PROPS.map((p) => (
                <tr key={p.name} className="h-[61px] border-b-2 border-[#ececec]">
                  <th
                    scope="row"
                    className={
                      p.selected
                        ? "border-r-2 border-[#ececec] bg-[#118aff] p-0 pl-2 text-left font-normal text-white"
                        : "border-r-2 border-[#ececec] p-0 pl-2 text-left font-normal"
                    }
                  >
                    {p.name}
                  </th>
                  <td className="p-0">
                    {p.icon && (
                      <button
                        type="button"
                        aria-label={`Edit ${p.name}`}
                        className="flex h-[58px] w-[63px] items-center justify-center border-2 border-t-white border-l-white border-r-[#8c8c8c] border-b-[#8c8c8c] bg-[#f2f2f2]"
                      >
                        <p.icon />
                      </button>
                    )}
                  </td>
                  <td className="p-0 pl-[22px]">
                    {p.swatch ? <div className="ml-2.5 h-[30px] w-[62px] bg-black" /> : p.value}
                  </td>
                </tr>
              ))}
            </tbody>
          </table>
        </div>
      </div>
    </section>
  );
}

/* ---------- Save As dialog ---------- */

const PLACES = [
  { label: "Recent places", icon: RecentPlacesIcon },
  { label: "Desktop", icon: DesktopIcon },
  { label: "Libraries", icon: LibrariesIcon },
  { label: "Computer", icon: ComputerIcon },
  { label: "Network", icon: NetworkIcon },
];

const FILES = ["examples", "pde", "simulink"];

function FileList() {
  return (
    <div>
      <div className="h-[775px] overflow-hidden bg-white">
        <table className={`h-full w-full table-fixed border-collapse text-[33px] leading-10 whitespace-nowrap ${UI}`}>
          <colgroup>
            <col />
            <col className="w-[348px]" />
            <col className="w-[170px]" />
          </colgroup>
          <thead>
            <tr className="h-[69px] border-b-2 border-[#e4ecf4] bg-[#fcfcfd] text-left">
              <th className="relative p-0 pl-[18px] font-normal">
                Name
                <svg viewBox="0 0 20 12" className="absolute top-0.5 left-1/2 h-3 w-5 -translate-x-2" aria-hidden="true">
                  <path d="M0 12L10 0L20 12Z" fill="#6fb0c8" />
                  <path d="M0 12L10 0L12 3L4 12Z" fill="#2f6078" />
                </svg>
              </th>
              <th className="border-l-2 border-[#e4ecf4] p-0 pl-[18px] font-normal">Date modified</th>
              <th className="border-l-2 border-[#e4ecf4] p-0 pl-[18px] font-normal">Type</th>
            </tr>
          </thead>
          <tbody>
            {FILES.map((f) => (
              <tr key={f} className="h-[55px]">
                <td className="p-0 pl-[26px]">
                  <span className="flex items-center gap-[11px]">
                    <FolderIcon />
                    {f}
                  </span>
                </td>
                <td className="border-l-2 border-[#e4ecf4] p-0 pl-[18px]">10/16/2012 6:02 PM</td>
                <td className="border-l-2 border-[#e4ecf4] p-0 pl-[18px]">File folder</td>
              </tr>
            ))}
            <tr>
              <td />
              <td className="border-l-2 border-[#e4ecf4]" />
              <td className="border-l-2 border-[#e4ecf4]" />
            </tr>
          </tbody>
        </table>
      </div>
      <div className="flex h-[43px] items-stretch">
        <button type="button" aria-label="Scroll left" className="flex w-12 items-center justify-center">
          <Chevron d="M15 2L6 12L15 22" />
        </button>
        <div className="flex-1">
          <div className="h-full w-[76%] bg-[#c5c5c5]" />
        </div>
        <button type="button" aria-label="Scroll right" className="flex w-12 items-center justify-center">
          <Chevron d="M5 2L14 12L5 22" />
        </button>
      </div>
    </div>
  );
}

function SaveDialog() {
  return (
    <section
      role="dialog"
      aria-labelledby="save-title"
      className="absolute top-[118px] right-[453px] left-[531px] border-2 border-[#8f3f6f] bg-[#cf5093] pb-5 pl-5 shadow-[0_0_6px_rgba(0,0,0,0.25)]"
    >
      <div className="grid h-[87px] grid-cols-[1fr_auto_1fr] pr-[17px]">
        <div className="flex items-center pl-2"><MatlabIcon /></div>
        <h2 id="save-title" className="flex items-center pb-0.5 text-[40px] leading-[52px]">Save As:</h2>
        <div className="flex justify-end">
          <button type="button" aria-label="Close" className="flex h-[60px] w-[90px] items-center justify-center bg-[#c13030] pt-0.5">
            <Cross className="h-[22px] w-6" />
          </button>
        </div>
      </div>

      <form className={`relative mr-5 border-2 border-[#a5447c] bg-[#eeeeee] pt-5 pb-6 ${CLASSIC}`} onSubmit={(e) => e.preventDefault()}>
        <div className="flex items-center">
          <label htmlFor="save-in" className="w-[287px] pr-6 pb-1 text-right">Save in:</label>
          <Sunken className="h-[67px] flex-1">
            <FolderIcon className="pointer-events-none absolute left-[18px] h-[46px] w-[38px]" />
            <select id="save-in" className="h-full w-full appearance-none pl-[71px]">
              <option>Arduino-Matlab Support</option>
            </select>
          </Sunken>
          <div className="flex w-[567px] items-center pb-1 pl-[52px]">
            <button type="button" aria-label="Go to last folder"><BackIcon /></button>
            <button type="button" aria-label="Up one level" className="ml-6"><UpOneLevelIcon /></button>
            <button type="button" aria-label="Create new folder" className="ml-[22px]"><NewFolderIcon /></button>
            <button type="button" aria-label="View menu" className="ml-[18px] flex items-center gap-1">
              <ViewsIcon />
              <Triangle className="h-3 w-[22px]" />
            </button>
          </div>
        </div>

        <div className="mt-[17px] grid grid-cols-[287px_1fr] pr-4">
          <nav aria-label="Places" className="flex flex-col items-center gap-[19px] pt-2.5 pr-1 text-[31px]">
            {PLACES.map((p) => (
              <button key={p.label} type="button" className="flex flex-col items-center">
                <span className="flex h-24 items-center"><p.icon /></span>
                <span>{p.label}</span>
              </button>
            ))}
          </nav>
          <FileList />
        </div>

        <div className="mt-[30px] flex flex-col gap-[9px] pr-4 pl-[292px]">
          <div className="flex items-start">
            <label htmlFor="file-name" className="w-[273px] pt-4">File name:</label>
            <Sunken className="h-[62px] flex-1">
              <input id="file-name" defaultValue="sample1" className="[field-sizing:content] bg-transparent pl-1 outline-none" />
              <span className="h-[38px] w-0.5 bg-black" />
            </Sunken>
            <div className="pl-[100px]"><PushButton primary>Save</PushButton></div>
          </div>
          <div className="flex items-center">
            <label htmlFor="file-type" className="w-[273px]">Save as type:</label>
            <Sunken className="h-[60px] flex-1">
              <select id="file-type" className="h-full w-full appearance-none pt-1 pl-2">
                <option>Figures (*.fig)</option>
              </select>
            </Sunken>
            <div className="pl-[100px]"><PushButton>Cancel</PushButton></div>
          </div>
        </div>

        <svg viewBox="0 0 34 34" className="absolute right-0 bottom-0 h-[34px] w-[34px]" aria-hidden="true">
          <path d="M2 34L34 2M13 34L34 13M24 34L34 24" stroke="#8c8c8c" strokeWidth="3" />
          <path d="M5 34L34 5M16 34L34 16M27 34L34 27" stroke="#fff" strokeWidth="2" />
        </svg>
      </form>
    </section>
  );
}

export default function App() {
  return (
    <main className={`relative h-screen w-full overflow-hidden text-black ${UI}`}>
      <MainWindow />
      <GuideWindow />
      <InspectorWindow />
      <SaveDialog />
    </main>
  );
}
